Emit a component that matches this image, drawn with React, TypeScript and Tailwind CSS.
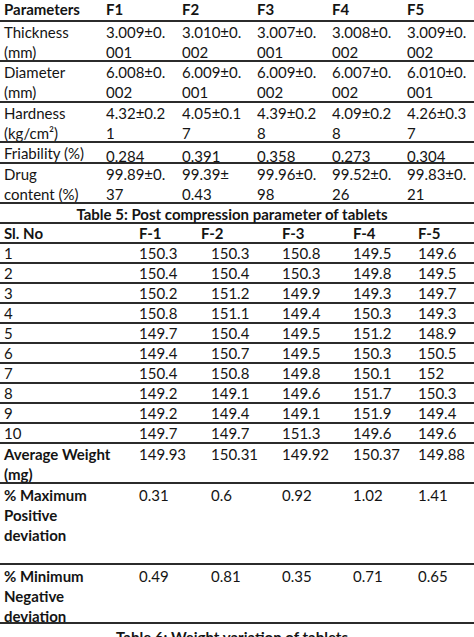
import React from "react";

const top: [string[], string[][], string][] = [
  [["Thickness", "(mm)"], [["3.009±0.", "001"], ["3.010±0.", "002"], ["3.007±0.", "001"], ["3.008±0.", "002"], ["3.009±0.", "002"]], "h-[40px]"],
  [["Diameter", "(mm)"], [["6.008±0.", "002"], ["6.009±0.", "001"], ["6.009±0.", "002"], ["6.007±0.", "002"], ["6.010±0.", "001"]], "h-[41px]"],
  [["Hardness", "(kg/cm²)"], [["4.32±0.2", "1"], ["4.05±0.1", "7"], ["4.39±0.2", "8"], ["4.09±0.2", "8"], ["4.26±0.3", "7"]], "h-[40px]"],
];

const weights: string[][] = [
  ["1", "150.3", "150.3", "150.8", "149.5", "149.6"],
  ["2", "150.4", "150.4", "150.3", "149.8", "149.5"],
  ["3", "150.2", "151.2", "149.9", "149.3", "149.7"],
  ["4", "150.8", "151.1", "149.4", "150.3", "149.3"],
  ["5", "149.7", "150.4", "149.5", "151.2", "148.9"],
  ["6", "149.4", "150.7", "149.5", "150.3", "150.5"],
  ["7", "150.4", "150.8", "149.8", "150.1", "152"],
  ["8", "149.2", "149.1", "149.6", "151.7", "150.3"],
  ["9", "149.2", "149.4", "149.1", "151.9", "149.4"],
  ["10", "149.7", "149.7", "151.3", "149.6", "149.6"],
];

const topGrid = "grid grid-cols-[102px_76px_75px_75px_75px_1fr] border-b-2 border-[#2b2b2b]";
const lowGrid = "grid grid-cols-[135px_72px_71px_71px_65px_1fr] border-b-2 border-[#2b2b2b]";

function Lines({ lines }: { lines: string[] }) {
  return (
    <div className="pl-[4px]">
      {lines.map((l, i) => (
        <div key={i} className="whitespace-nowrap">{l}</div>
      ))}
    </div>
  );
}

export default function App() {
  return (
    <div
      className="w-[474px] h-[637px] overflow-hidden bg-white text-[#141414] text-[15px] leading-[20px]"
      style={{ fontFamily: "Lato, 'Open Sans', sans-serif" }}
    >
      {/* Table 5 */}
      <div className={topGrid + " h-[22px] leading-[18px] font-bold"}>
        {["Parameters", "F1", "F2", "F3", "F4", "F5"].map((h) => (
          <div key={h} className="pl-[4px] whitespace-nowrap">{h}</div>
        ))}
      </div>
      {top.map(([name, vals, h]) => (
        <div key={name[0]} className={topGrid + " " + h}>
          <Lines lines={name} />
          {vals.map((v, i) => (
            <Lines key={i} lines={v} />
          ))}
        </div>
      ))}
      <div className={topGrid + " h-[21px]"}>
        <div className="pl-[4px] whitespace-nowrap">Friability (%)</div>
        {["0.284", "0.391", "0.358", "0.273", "0.304"].map((v) => (
          <div key={v} className="pl-[4px] pt-[3px]">{v}</div>
        ))}
      </div>
      <div className={topGrid + " h-[40px]"}>
        <Lines lines={["Drug", "content (%)"]} />
        {[["99.89±0.", "37"], ["99.39±", "0.43"], ["99.96±0.", "98"], ["99.52±0.", "26"], ["99.83±0.", "21"]].map((v, i) => (
          <Lines key={i} lines={v} />
        ))}
      </div>
      <div className="h-[20px] border-b-2 border-[#2b2b2b] leading-[16px] pt-[2px] font-bold text-center pr-[10px] whitespace-nowrap">
        Table 5: Post compression parameter of tablets
      </div>

      {/* Table 6 */}
      <div className={lowGrid + " h-[20px] leading-[18px] font-bold"}>
        <div className="pl-[4px]">Sl. No</div>
        <div className="pl-[4px]">F-1</div>
        <div className="-ml-[6px]">F-2</div>
        <div className="pl-[4px]">F-3</div>
        <div className="pl-[4px]">F-4</div>
        <div className="pl-[4px]">F-5</div>
      </div>
      {weights.map((r) => (
        <div key={r[0]} className={lowGrid + " h-[20px] leading-[18px]"}>
          {r.map((c, i) => (
            <div key={i} className="pl-[4px] whitespace-nowrap">{c}</div>
          ))}
        </div>
      ))}
      <div className={lowGrid + " h-[40px]"}>
        <div className="pl-[4px] font-bold">
          <div className="whitespace-nowrap">Average Weight</div>
          <div>(mg)</div>
        </div>
        {["149.93", "150.31", "149.92", "150.37", "149.88"].map((v) => (
          <div key={v} className="pl-[4px]">{v}</div>
        ))}
      </div>
      <div className={lowGrid + " h-[81px] pt-[1px]"}>
        <div className="pl-[4px] font-bold">
          <div>% Maximum</div>
          <div>Positive</div>
          <div>deviation</div>
        </div>
        {["0.31", "0.6", "0.92", "1.02", "1.41"].map((v) => (
          <div key={v} className="pl-[4px]">{v}</div>
        ))}
      </div>
      <div className={lowGrid + " h-[59px] pt-[1px]"}>
        <div className="pl-[4px] font-bold">
          <div>% Minimum</div>
          <div>Negative</div>
          <div>deviation</div>
        </div>
        {["0.49", "0.81", "0.35", "0.71", "0.65"].map((v) => (
          <div key={v} className="pl-[4px]">{v}</div>
        ))}
      </div>
      <div className="pt-[3px] font-bold text-center pr-[10px] whitespace-nowrap">
        Table 6: Weight variation of tablets
      </div>
    </div>
  );
}
